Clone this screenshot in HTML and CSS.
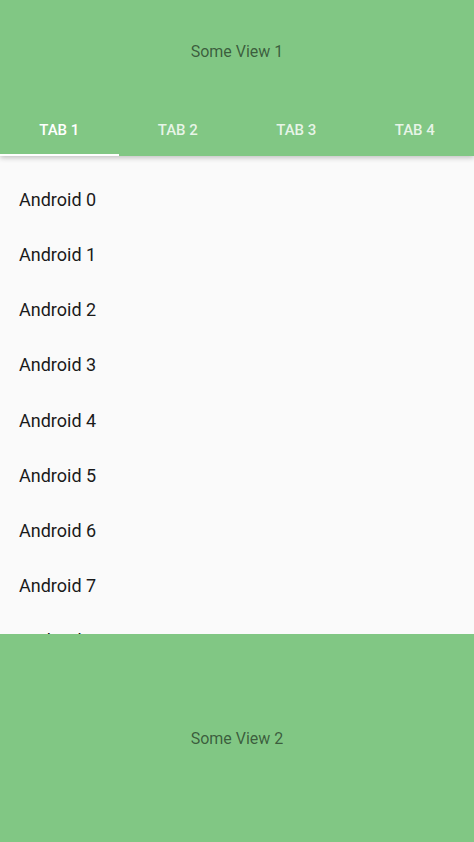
FILE: index.html
```html
<!DOCTYPE html>
<html>
<head>
<meta charset="utf-8">
<link rel="stylesheet" href="styles.css">
</head>
<body>
<div class="app">
  <header class="top">
    <div class="view-title">Some View 1</div>
    <nav class="tabs">
      <div class="tab active">TAB 1</div>
      <div class="tab">TAB 2</div>
      <div class="tab">TAB 3</div>
      <div class="tab">TAB 4</div>
    </nav>
  </header>
  <main class="list">
    <div class="row">Android 0</div>
    <div class="row">Android 1</div>
    <div class="row">Android 2</div>
    <div class="row">Android 3</div>
    <div class="row">Android 4</div>
    <div class="row">Android 5</div>
    <div class="row">Android 6</div>
    <div class="row">Android 7</div>
    <div class="row">Android 8</div>
  </main>
  <footer class="bottom">
    <div class="view-title2">Some View 2</div>
  </footer>
</div>
</body>
</html>
```
FILE: styles.css
```css
html, body {
  margin: 0;
  padding: 0;
}
body {
  font-family: Roboto, "Liberation Sans", sans-serif;
  background: #fafafa;
}
.app {
  width: 474px;
  height: 842px;
  display: flex;
  flex-direction: column;
  overflow: hidden;
}
.top {
  background: #81c784;
  position: relative;
  z-index: 2;
  box-shadow: 0 2px 5px rgba(0,0,0,0.22);
  flex: none;
}
.view-title {
  height: 102px;
  display: flex;
  align-items: center;
  justify-content: center;
  font-size: 16px;
  color: rgba(0,0,0,0.55);
}
.tabs {
  display: flex;
  height: 54px;
}
.tab {
  flex: 1;
  display: flex;
  align-items: center;
  justify-content: center;
  font-size: 15px;
  font-weight: 500;
  color: rgba(255,255,255,0.82);
  box-sizing: border-box;
  padding-top: 1px;
}
.tab.active {
  color: #ffffff;
  box-shadow: inset 0 -2px 0 #ffffff;
}
.list {
  flex: 1;
  background: #fafafa;
  overflow: hidden;
  padding-top: 16px;
  box-sizing: border-box;
  min-height: 0;
}
.row {
  height: 55.15px;
  display: flex;
  align-items: center;
  padding-left: 19px;
  font-size: 18px;
  color: #1a1a1a;
}
.bottom {
  flex: none;
  height: 208px;
  background: #81c784;
  display: flex;
  align-items: center;
  justify-content: center;
}
.view-title2 {
  font-size: 16px;
  color: rgba(0,0,0,0.55);
}
```
